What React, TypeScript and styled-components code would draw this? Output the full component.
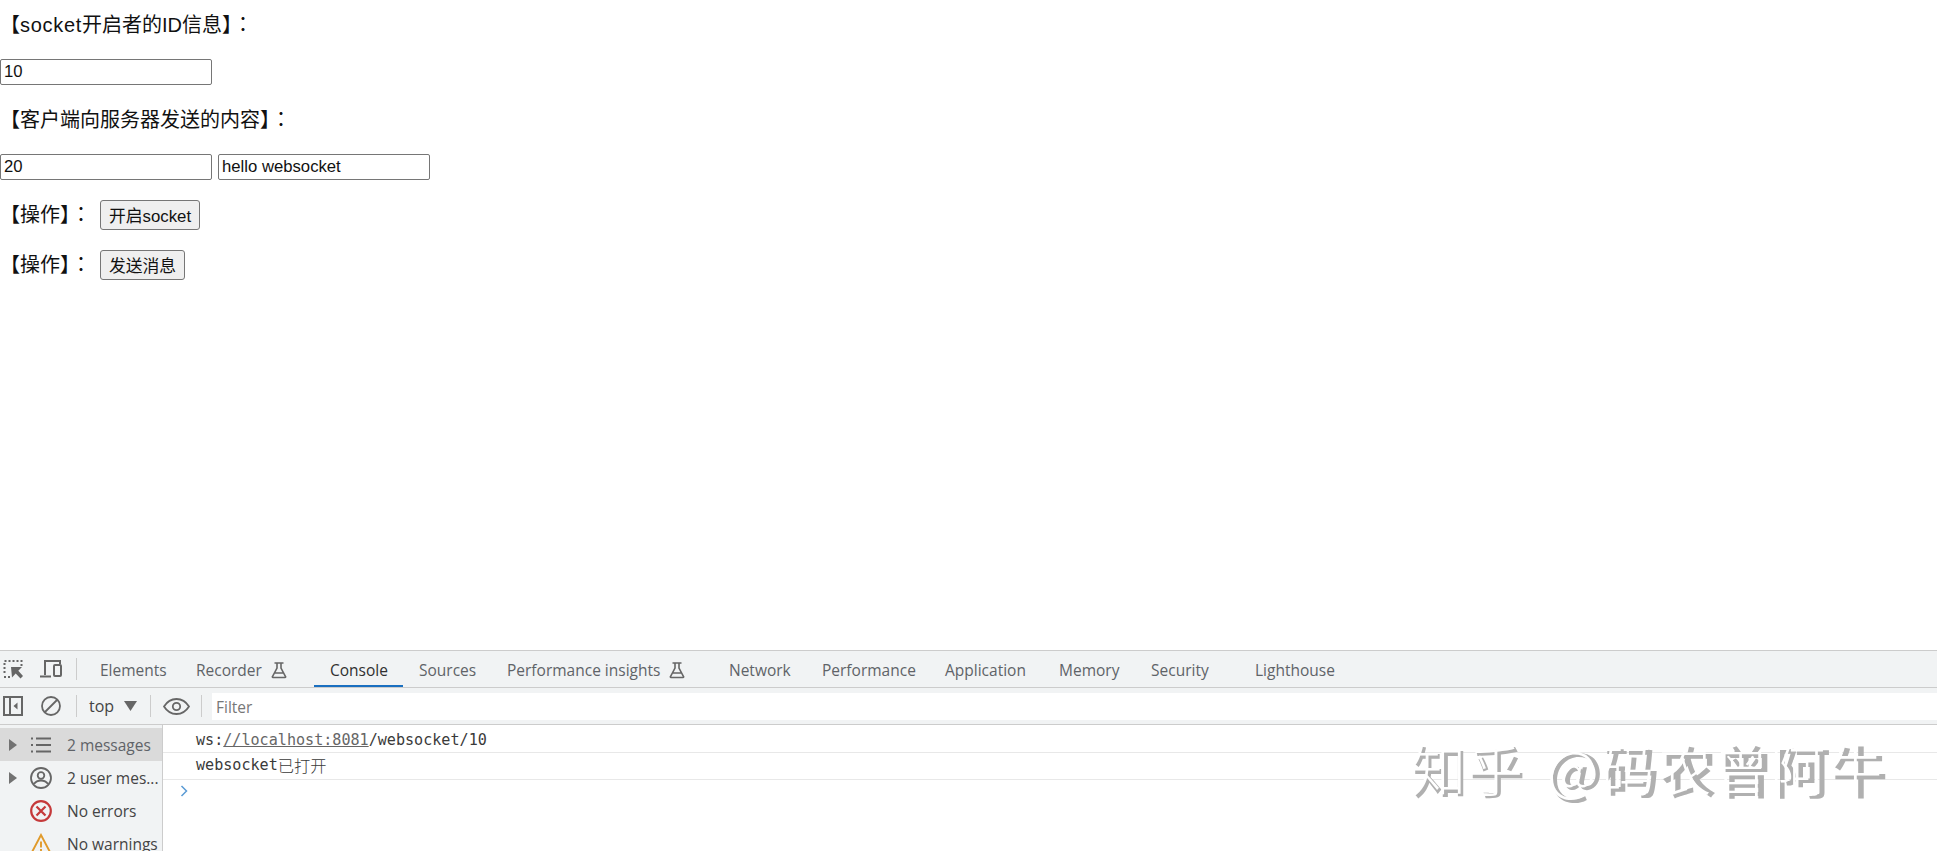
import React from "react";
import styled, { createGlobalStyle } from "styled-components";

const Global = createGlobalStyle`
  html, body { margin: 0; padding: 0; background: #fff; overflow: hidden; }
  * { box-sizing: border-box; }
`;

const cjk = `"Liberation Sans", "Noto Sans CJK SC", sans-serif`;
const ui = `"Open Sans", "Noto Sans", sans-serif`;

const Page = styled.div`
  position: relative;
  width: 1937px;
  height: 851px;
  display: flex;
  flex-direction: column;
  overflow: hidden;
`;
const Form = styled.main`
  height: 650px;
  padding-top: 10px;
  display: flex;
  flex-direction: column;
  gap: 20px;
  font-family: ${cjk};
  color: #111;
`;
const Heading = styled.p`
  margin: 0;
  height: 29px;
  font-size: 20px;
  line-height: 28px;
  white-space: nowrap;
`;
const Word = styled.span`
  letter-spacing: 0.7px;
`;
const Colon = styled.span`
  margin-left: 1px;
  font-family: "Noto Sans CJK TC", sans-serif;
`;
const Fields = styled.div`
  display: flex;
  gap: 6px;
  height: 26px;
  align-items: flex-start;
`;
const Field = styled.input`
  width: 212px;
  height: 26px;
  padding: 0 3px;
  border: 1px solid #767676;
  border-radius: 2px;
  font: 16.7px "Liberation Sans", sans-serif;
  color: #111;
  background: #fff;
  outline: none;
`;
const Action = styled.div`
  display: flex;
  height: 30px;
  align-items: flex-start;
  font-size: 20px;
  line-height: 28px;
`;
const ActionLabel = styled.span`
  width: 100px;
`;
const Button = styled.button`
  height: 30px;
  padding: 3px 8px 0;
  border: 1px solid #767676;
  border-radius: 3px;
  background: #efefef;
  color: #111;
  font: 16.8px ${cjk};
  line-height: 25px;
`;

const Dev = styled.section`
  flex: 1;
  display: flex;
  flex-direction: column;
  border-top: 1px solid #ccc;
  min-height: 0;
  font-family: ${ui};
  color: #444;
`;
const TabBar = styled.nav`
  height: 37px;
  flex: none;
  display: flex;
  align-items: stretch;
  background: #f1f3f4;
  border-bottom: 1px solid #ccc;
`;
const IconSlot = styled.span<{ $w: number }>`
  width: ${(p) => p.$w}px;
  flex: none;
  display: flex;
  align-items: center;
  justify-content: center;
  color: #666;
`;
const Sep = styled.span`
  width: 1px;
  height: 22px;
  align-self: center;
  flex: none;
  background: #ccc;
`;
const Tab = styled.div<{ $active?: boolean; $w: number; $offset?: number }>`
  width: ${(p) => p.$w}px;
  margin-left: ${(p) => p.$offset ?? 0}px;
  flex: none;
  display: flex;
  align-items: center;
  gap: 8px;
  padding: 2px 0 0 16px;
  font-size: 15.5px;
  white-space: nowrap;
  color: ${(p) => (p.$active ? "#303030" : "#5f6368")};
  box-shadow: ${(p) => (p.$active ? "inset 0 -2px 0 #1a6fc0" : "none")};
`;
const Toolbar = styled.div`
  height: 37px;
  flex: none;
  display: flex;
  align-items: center;
  background: #f1f3f4;
  border-bottom: 1px solid #ccc;
`;
const Context = styled.div`
  width: 73px;
  padding-left: 12px;
  display: flex;
  align-items: center;
  gap: 10px;
  font-size: 16px;
  color: #444;
  flex: none;
`;
const Filter = styled.div`
  flex: 1;
  height: 27px;
  margin-left: 10px;
  padding-left: 4px;
  background: #fff;
  font-size: 15.5px;
  line-height: 28px;
  color: #777;
`;
const Body = styled.div`
  flex: 1;
  display: flex;
  min-height: 0;
`;
const Side = styled.aside`
  width: 163px;
  flex: none;
  padding-top: 3px;
  background: #f1f3f4;
  border-right: 1px solid #ccc;
`;
const SideRow = styled.div<{ $selected?: boolean }>`
  height: 33px;
  display: flex;
  align-items: center;
  background: ${(p) => (p.$selected ? "#dadada" : "transparent")};
  font-size: 15.5px;
  color: ${(p) => (p.$selected ? "#5f6368" : "#444")};
  white-space: nowrap;
`;
const Disclosure = styled.span`
  width: 30px;
  flex: none;
  display: flex;
  justify-content: center;
  padding-right: 5px;
  color: #727272;
`;
const SideIcon = styled.span`
  width: 37px;
  flex: none;
  display: flex;
`;
const Log = styled.div`
  flex: 1;
  min-width: 0;
  font: 15.1px "DejaVu Sans Mono", "Noto Sans CJK SC", monospace;
  color: #3a3a3a;
`;
const Message = styled.div<{ $h: number; $shift: number }>`
  height: ${(p) => p.$h}px;
  padding: ${(p) => (p.$shift > 0 ? p.$shift : 0)}px 0 ${(p) => (p.$shift < 0 ? -p.$shift : 0)}px 33px;
  border-bottom: 1px solid #e8e8e8;
  display: flex;
  align-items: center;
  white-space: pre;
`;
const Url = styled.span`
  color: #666;
  text-decoration: underline;
`;
const Han = styled.span`
  font-family: "Noto Sans CJK SC", sans-serif;
  font-weight: 300;
  font-size: 16.3px;
`;
const Prompt = styled.div`
  padding: 5px 0 0 17px;
  display: flex;
`;
const Watermark = styled.div`
  position: absolute;
  left: 1413px;
  top: 731px;
  font: 500 55px/76px "Noto Sans CJK SC", sans-serif;
  letter-spacing: 2px;
  word-spacing: 8px;
  color: #b0b0b0;
  white-space: nowrap;
  &::after {
    content: attr(data-text);
    position: absolute;
    left: -2px;
    top: -2px;
    color: #fff;
    font-weight: 300;
  }
`;

const Flask = () => (
  <svg width="18" height="18" viewBox="0 0 18 18" fill="none" stroke="#666" strokeWidth="1.6">
    <path d="M4.5 2h9M7 2v5L2.5 15.500a.6.6 0 0 0 .5 1h12a.6.6 0 0 0 .5-1L11 7V2M5 12h8" />
  </svg>
);
const Inspect = () => (
  <svg width="22" height="22" viewBox="0 0 22 22" fill="none" stroke="#666">
    <path d="M2.500 15V3h17v5" strokeWidth="2" strokeDasharray="2 2" />
    <path d="M2 19h6" strokeWidth="2" strokeDasharray="2 2" />
    <path d="M9 9h11l-3.700 3.700L21 18l-2.500 2.500-4.800-5L10 19.500z" fill="#666" stroke="none" />
  </svg>
);
const Device = () => (
  <svg width="24" height="22" viewBox="0 0 24 22" fill="none" stroke="#666" strokeWidth="2">
    <path d="M6 17V3h15v3" />
    <path d="M1 18.500h11" />
    <rect x="15" y="7" width="7" height="11" rx="1" />
  </svg>
);
const SidebarToggle = () => (
  <svg width="20" height="20" viewBox="0 0 20 20" fill="none" stroke="#666" strokeWidth="2">
    <rect x="1" y="1" width="18" height="18" />
    <path d="M7 1v18" />
    <path d="M14.500 6.500v7L10.500 10z" fill="#666" stroke="none" />
  </svg>
);
const Block = () => (
  <svg width="20" height="20" viewBox="0 0 20 20" fill="none" stroke="#666" strokeWidth="1.8">
    <circle cx="10" cy="10" r="9" />
    <path d="M4 16L16 4" />
  </svg>
);
const Eye = () => (
  <svg width="27" height="17" viewBox="0 0 27 17" fill="none" stroke="#666" strokeWidth="1.800">
    <path d="M1 8.500c3-4.800 7.500-7.500 12.500-7.500S23 3.700 26 8.500c-3 4.800-7.500 7.500-12.500 7.500S4 13.300 1 8.500z" />
    <circle cx="13.500" cy="8.500" r="3.700" />
  </svg>
);
const Caret = () => (
  <svg width="13" height="10" viewBox="0 0 13 10">
    <path d="M0 0h13L6.500 10z" fill="#666" />
  </svg>
);
const RightTri = () => (
  <svg width="8" height="12" viewBox="0 0 8 12">
    <path d="M0 0l8 6-8 6z" fill="currentColor" />
  </svg>
);
const ListIcon = () => (
  <svg width="22" height="18" viewBox="0 0 22 18" fill="none" stroke="#666" strokeWidth="2">
    <path d="M6 2.500h15M6 9h15M6 15.500h15" />
    <path d="M1 2.500h2M1 9h2M1 15.500h2" />
  </svg>
);
const UserIcon = () => (
  <svg width="22" height="22" viewBox="0 0 22 22" fill="none" stroke="#666" strokeWidth="1.800">
    <circle cx="11" cy="11" r="10" />
    <circle cx="11" cy="8.500" r="3.300" />
    <path d="M4 17c2-3 4.500-3.500 7-3.500s5 .5 7 3.500" />
  </svg>
);
const ErrorIcon = () => (
  <svg width="22" height="22" viewBox="0 0 22 22" fill="none" stroke="#c5393a" strokeWidth="2.200">
    <circle cx="11" cy="11" r="9.800" />
    <path d="M6.500 6.500l9 9M15.500 6.500l-9 9" />
  </svg>
);
const WarnIcon = () => (
  <svg width="22" height="22" viewBox="0 0 22 22" fill="none" stroke="#e09a2b" strokeWidth="1.900">
    <path d="M11 2L1.500 20h19z" />
    <path d="M11 8.500v6M11 16v2" />
  </svg>
);
const Chevron = () => (
  <svg width="8" height="12" viewBox="0 0 8 12" fill="none" stroke="#5b9bd5" strokeWidth="1.500">
    <path d="M1.500 1l5 5-5 5" />
  </svg>
);

export default function App() {
  return (
    <Page>
      <Global />
      <Form>
        <Heading>
          【<Word>socket</Word>开启者的ID信息】<Colon>：</Colon>
        </Heading>
        <Fields>
          <Field defaultValue="10" />
        </Fields>
        <Heading>
          【客户端向服务器发送的内容】<Colon>：</Colon>
        </Heading>
        <Fields>
          <Field defaultValue="20" />
          <Field defaultValue="hello websocket" />
        </Fields>
        <Action>
          <ActionLabel>
            【操作】<Colon>：</Colon>
          </ActionLabel>
          <Button>开启socket</Button>
        </Action>
        <Action>
          <ActionLabel>
            【操作】<Colon>：</Colon>
          </ActionLabel>
          <Button>发送消息</Button>
        </Action>
      </Form>
      <Dev>
        <TabBar>
          <IconSlot $w={25}><Inspect /></IconSlot>
          <IconSlot $w={51}><Device /></IconSlot>
          <Sep />
          <Tab $w={96} $offset={7}>Elements</Tab>
          <Tab $w={134}>Recorder <Flask /></Tab>
          <Tab $w={89} $active>Console</Tab>
          <Tab $w={88}>Sources</Tab>
          <Tab $w={222}>Performance insights <Flask /></Tab>
          <Tab $w={93}>Network</Tab>
          <Tab $w={123}>Performance</Tab>
          <Tab $w={114}>Application</Tab>
          <Tab $w={92}>Memory</Tab>
          <Tab $w={89}>Security</Tab>
          <Tab $w={110} $offset={15}>Lighthouse</Tab>
        </TabBar>
        <Toolbar>
          <IconSlot $w={25}><SidebarToggle /></IconSlot>
          <IconSlot $w={51}><Block /></IconSlot>
          <Sep />
          <Context>top <Caret /></Context>
          <Sep />
          <IconSlot $w={50}><Eye /></IconSlot>
          <Sep />
          <Filter>Filter</Filter>
        </Toolbar>
        <Body>
          <Side>
            <SideRow $selected>
              <Disclosure><RightTri /></Disclosure>
              <SideIcon><ListIcon /></SideIcon>2 messages
            </SideRow>
            <SideRow>
              <Disclosure><RightTri /></Disclosure>
              <SideIcon><UserIcon /></SideIcon>2 user mes...
            </SideRow>
            <SideRow>
              <Disclosure />
              <SideIcon><ErrorIcon /></SideIcon>No errors
            </SideRow>
            <SideRow>
              <Disclosure />
              <SideIcon><WarnIcon /></SideIcon>No warnings
            </SideRow>
          </Side>
          <Log>
            <Message $h={28} $shift={2}>ws:<Url>//localhost:8081</Url>/websocket/10</Message>
            <Message $h={27} $shift={-2}>websocket<Han>已打开</Han></Message>
            <Prompt><Chevron /></Prompt>
          </Log>
        </Body>
      </Dev>
      <Watermark data-text="知乎 @码农曾阿牛">知乎 @码农曾阿牛</Watermark>
    </Page>
  );
}
